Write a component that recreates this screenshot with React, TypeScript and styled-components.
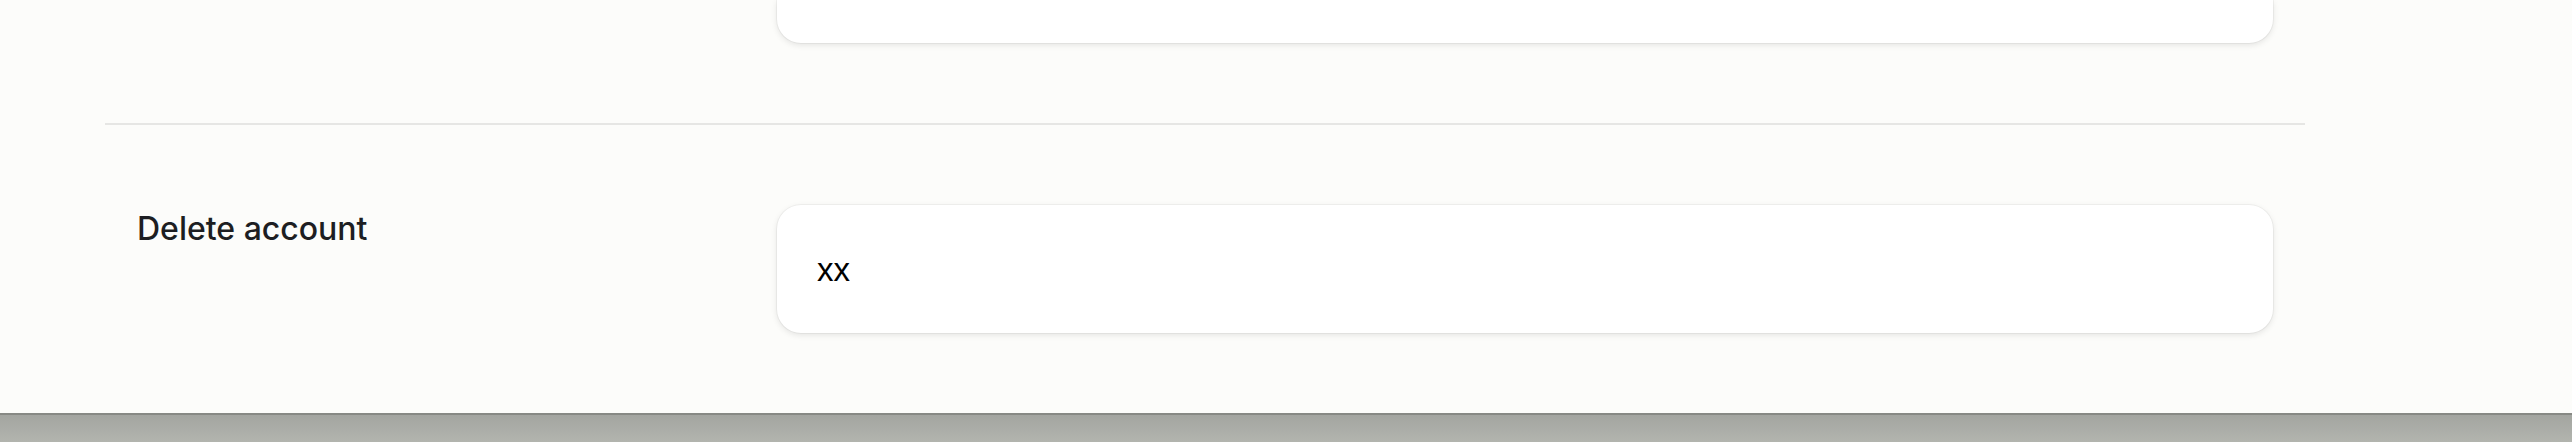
import React from 'react';
import styled, { createGlobalStyle } from 'styled-components';

const GlobalStyle = createGlobalStyle`
  html, body {
    margin: 0;
    padding: 0;
    background: #fcfcfa;
  }
  body {
    font-family: Inter, "Noto Sans", sans-serif;
    -webkit-font-smoothing: antialiased;
  }
`;

const Page = styled.div`
  display: flex;
  flex-direction: column;
  height: 442px;
  overflow: hidden;
  background: #fcfcfa;
`;

const Content = styled.div`
  flex: 1;
  padding-left: 105px;
`;

const Sections = styled.div`
  width: 2200px;
`;

const Section = styled.section<{ first?: boolean }>`
  display: grid;
  grid-template-columns: 640px 1fr;
  padding: ${props => (props.first ? '0 32px 80px' : '80px 32px')};
  border-bottom: ${props => (props.first ? '2px solid #e6e6e4' : 'none')};
`;

const Label = styled.h3`
  margin: 0;
  font-family: Inter, "Noto Sans", sans-serif;
  font-size: 32px;
  line-height: 48px;
  font-weight: 500;
  color: #1d1e22;
`;

const Card = styled.div<{ clipped?: boolean }>`
  display: flex;
  align-items: center;
  height: ${props => (props.clipped ? '43px' : '128px')};
  padding: 0 40px;
  box-sizing: border-box;
  background: #ffffff;
  border-radius: ${props => (props.clipped ? '0 0 24px 24px' : '24px')};
  box-shadow: 0 0 0 1px rgba(0, 0, 0, 0.04), 0 2px 6px rgba(0, 0, 0, 0.1);
`;

const CardText = styled.span`
  font-family: "Liberation Sans", Arial, sans-serif;
  font-size: 33px;
  color: #000000;
  padding-top: 2px;
`;

const Desktop = styled.div`
  height: 28px;
  flex-shrink: 0;
  border-top: 2px solid #878984;
  background: linear-gradient(180deg, #a3a5a0 0%, #b3b5af 100%);
`;

const App = () => {
  return (
    <>
      <GlobalStyle />
      <Page>
        <Content>
          <Sections>
            <Section first>
              <div />
              <Card clipped />
            </Section>
            <Section>
              <Label>Delete account</Label>
              <Card>
                <CardText>xx</CardText>
              </Card>
            </Section>
          </Sections>
        </Content>
        <Desktop />
      </Page>
    </>
  );
};

export default App;
